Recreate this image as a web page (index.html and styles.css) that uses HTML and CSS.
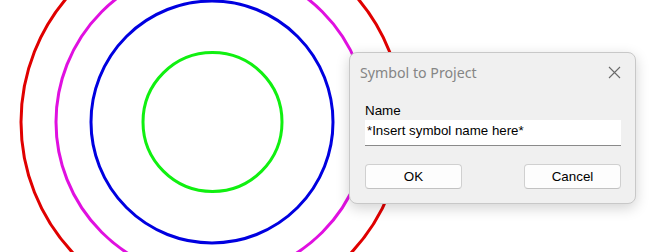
FILE: index.html
```html
<!DOCTYPE html>
<html>
<head>
<meta charset="utf-8">
<link rel="stylesheet" href="styles.css">
</head>
<body>
<div class="canvas">
  <svg class="rings" width="665" height="252" viewBox="0 0 665 252">
    <circle cx="212" cy="122" r="191" fill="none" stroke="#e00000" stroke-width="3"/>
    <circle cx="212" cy="122" r="156" fill="none" stroke="#e010e0" stroke-width="3"/>
    <circle cx="212" cy="122" r="121" fill="none" stroke="#0000e0" stroke-width="3"/>
    <circle cx="212.5" cy="122" r="69.5" fill="none" stroke="#10f010" stroke-width="3"/>
  </svg>
  <div class="dialog">
    <div class="titlebar">
      <span class="title">Symbol to Project</span>
      <svg class="close" width="13" height="13" viewBox="0 0 13 13">
        <path d="M1 1 L12 12 M12 1 L1 12" stroke="#6a6a6a" stroke-width="1.1" fill="none"/>
      </svg>
    </div>
    <div class="body">
      <div class="label">Name</div>
      <div class="input">*Insert symbol name here*</div>
      <div class="buttons">
        <div class="btn">OK</div>
        <div class="btn">Cancel</div>
      </div>
    </div>
  </div>
</div>
</body>
</html>
```
FILE: styles.css
```css
html, body {
  margin: 0;
  padding: 0;
  background: #ffffff;
}
.canvas {
  position: relative;
  width: 665px;
  height: 252px;
  overflow: hidden;
}
.rings {
  position: absolute;
  left: 0;
  top: 0;
}
.dialog {
  position: absolute;
  left: 349px;
  top: 52px;
  width: 287px;
  height: 152px;
  box-sizing: border-box;
  background: #f0f0f0;
  border: 1px solid #c8c8c8;
  border-radius: 8px;
  box-shadow: 0 4px 14px rgba(0,0,0,0.18);
  display: flex;
  flex-direction: column;
}
.titlebar {
  height: 38px;
  display: flex;
  align-items: center;
  justify-content: space-between;
  padding: 1px 14px 0 10px;
  box-sizing: border-box;
}
.title {
  font-family: "Noto Sans", "Open Sans", sans-serif;
  font-size: 14.2px;
  color: #858585;
}
.close {
  display: block;
}
.body {
  padding: 12px 14px 0 15px;
  display: flex;
  flex-direction: column;
}
.label {
  font-family: "Liberation Sans", Arial, sans-serif;
  font-size: 13.4px;
  color: #000;
  line-height: 15px;
  height: 15px;
}
.input {
  margin-top: 2px;
  height: 26px;
  box-sizing: border-box;
  background: #ffffff;
  border-bottom: 1px solid #8a8a8a;
  font-family: "Liberation Sans", Arial, sans-serif;
  font-size: 13.3px;
  color: #000;
  line-height: 18px;
  padding: 2px 0 0 2px;
}
.buttons {
  margin-top: 18px;
  display: flex;
  justify-content: space-between;
}
.btn {
  width: 97px;
  height: 25px;
  box-sizing: border-box;
  background: #fdfdfd;
  border: 1px solid #d0d0d0;
  border-bottom-color: #c2c2c2;
  border-radius: 4px;
  font-family: "Liberation Sans", Arial, sans-serif;
  font-size: 13.4px;
  color: #000;
  display: flex;
  align-items: center;
  justify-content: center;
}
```
